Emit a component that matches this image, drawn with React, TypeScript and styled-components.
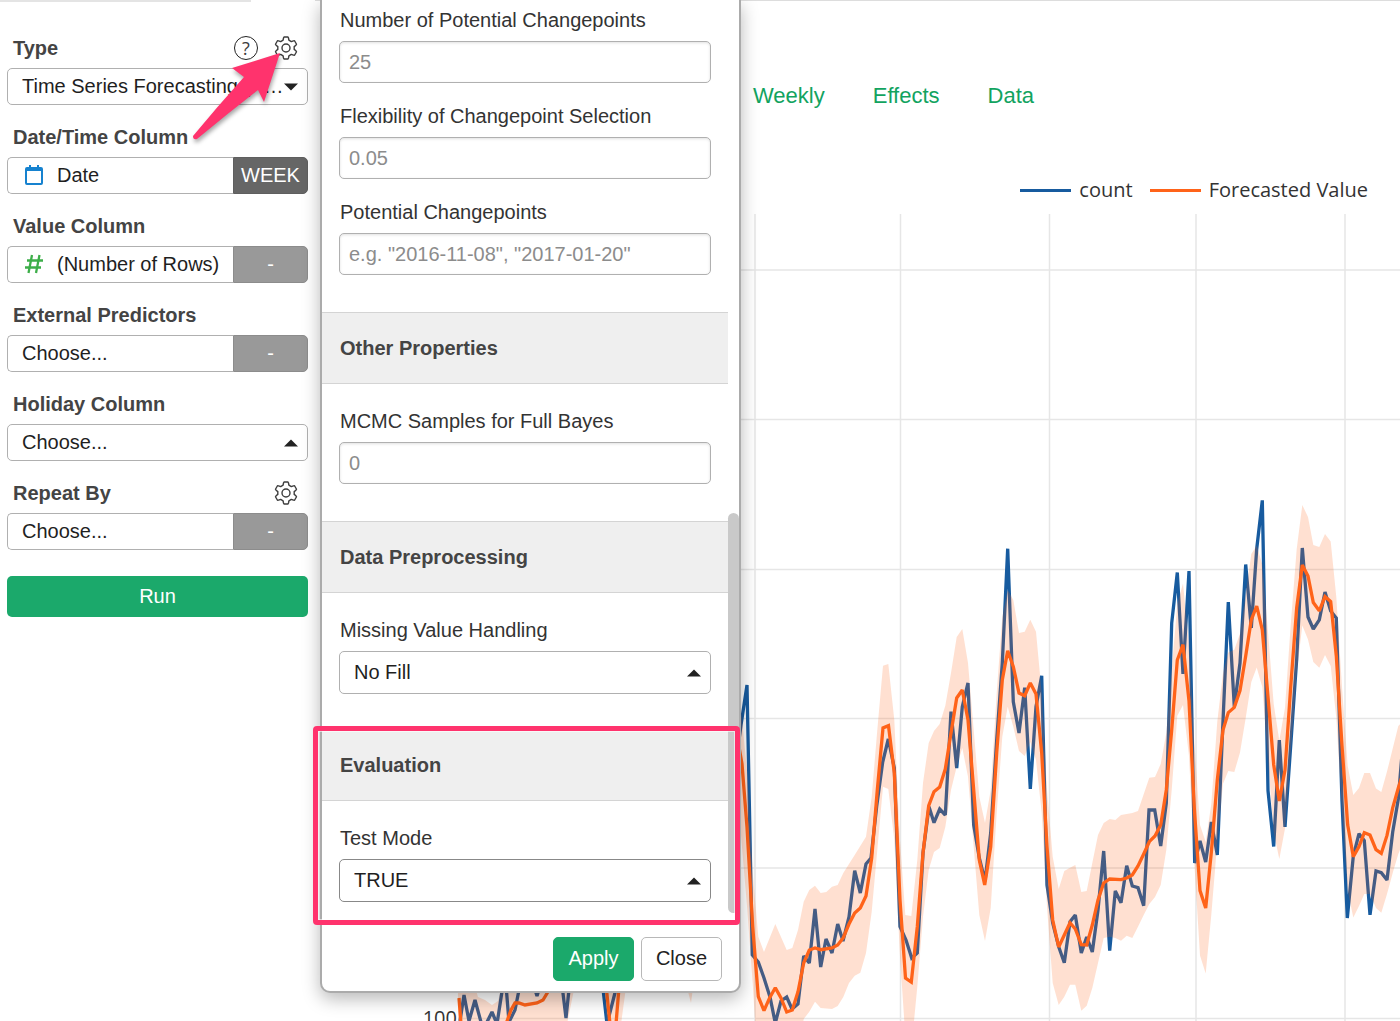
import React from "react";
import styled, { createGlobalStyle, css } from "styled-components";

const GlobalStyle = createGlobalStyle`
  *, *::before, *::after { box-sizing: border-box; }
  body {
    margin: 0;
    background: #fff;
    color: #222;
    font-family: "Liberation Sans", Arial, sans-serif;
    font-size: 20px;
    line-height: 24px;
  }
  button, input, select { font: inherit; color: inherit; margin: 0; }
`;

const green = "#1ba96b";
const pink = "#ff336d";
const blue = "#175b9f";
const orange = "#ff6319";

/* ---------- page ---------- */

const Page = styled.div`
  position: relative;
  display: grid;
  grid-template-columns: 315px minmax(0, 1fr);
  min-height: 100vh;
  overflow: hidden;
`;

const Sidebar = styled.form`
  position: relative;
  display: flex;
  flex-direction: column;
  gap: 22px;
  padding: 0 7px;
`;

const TopRule = styled.div`
  width: 251px;
  height: 2px;
  margin: 0 0 14px -7px;
  background: #e4e4e4;
`;

const Field = styled.div`
  display: flex;
  flex-direction: column;
  gap: 10px;
`;

const FieldHeader = styled.div`
  display: flex;
  align-items: center;
  gap: 16px;
  height: 20px;
  padding: 0 10px 0 6px;
`;

const FieldLabel = styled.label`
  flex: 1;
  color: #444;
  font-weight: bold;
  white-space: nowrap;
`;

const IconButton = styled.button`
  display: flex;
  padding: 0;
  border: 0;
  background: none;
  color: #3c3c3c;
`;

const HelpButton = styled(IconButton)`
  align-items: center;
  justify-content: center;
  width: 24px;
  height: 24px;
  border: 1px solid #222;
  border-radius: 50%;
  font-family: "Open Sans", "Noto Sans", sans-serif;
  font-size: 18px;
  line-height: 22px;
`;

const Control = styled.div`
  display: flex;
  height: 37px;
`;

const SelectBox = styled.div`
  position: relative;
  display: flex;
  align-items: center;
  flex: 1;
  min-width: 0;
`;

const Select = styled.select<{ $joined?: boolean; $icon?: boolean; $dark?: boolean }>`
  appearance: none;
  width: 100%;
  height: 100%;
  padding: 0 22px 2px ${(p) => (p.$icon ? 49 : 14)}px;
  border: 1px solid ${(p) => (p.$dark ? "#888" : "#b0b0b0")};
  border-radius: 5px;
  background: #fff;
  color: #1f1f1f;
  text-overflow: ellipsis;
  ${(p) =>
    p.$joined &&
    css`
      padding-right: 0;
      border-right: 0;
      border-radius: 5px 0 0 5px;
    `}
`;

const Caret = styled.svg<{ $up?: boolean }>`
  position: absolute;
  right: 10px;
  width: 14px;
  height: 8px;
  fill: #222;
  pointer-events: none;
  transform: ${(p) => (p.$up ? "none" : "rotate(180deg)")};
`;

const TypeIcon = styled.svg`
  position: absolute;
  left: 18px;
  width: 18px;
  height: 22px;
  fill: none;
  pointer-events: none;
`;

const Addon = styled.button<{ $active?: boolean }>`
  width: 75px;
  padding: 0 0 2px;
  border: 1px solid ${(p) => (p.$active ? "#5f5f5f" : "#8c8c8c")};
  border-radius: 0 5px 5px 0;
  background: ${(p) => (p.$active ? "#666" : "#999")};
  color: #fff;
`;

const RunButton = styled.button`
  height: 41px;
  margin-top: 4px;
  padding-bottom: 3px;
  border: 0;
  border-radius: 5px;
  background: ${green};
  color: #fff;
`;

/* ---------- result area ---------- */

const Main = styled.main`
  display: flex;
  flex-direction: column;
  border-top: 1px solid #ddd;
`;

const Tabs = styled.nav`
  display: flex;
  gap: 48px;
  padding: 81px 0 0 438px;
  font-size: 22px;
  line-height: 28px;
`;

const Tab = styled.a`
  color: #12a35f;
  text-decoration: none;
`;

const Legend = styled.div`
  display: flex;
  justify-content: flex-end;
  gap: 17px;
  padding: 66px 32px 9px 0;
  color: #333;
  font-family: "Open Sans", "Noto Sans", sans-serif;
  line-height: 28px;
`;

const LegendItem = styled.div<{ $color: string }>`
  display: flex;
  align-items: center;
  gap: 8px;
  &::before {
    content: "";
    width: 51px;
    height: 3px;
    background: ${(p) => p.$color};
  }
`;

const Plot = styled.svg`
  display: block;
  width: 100%;
  height: 808px;
`;

/* ---------- properties dialog ---------- */

const Dialog = styled.section`
  position: absolute;
  top: 0;
  left: 320px;
  width: 421px;
  border: 2px solid #ababab;
  border-top: 0;
  border-radius: 0 0 10px 10px;
  background: #fff;
  box-shadow: 0 6px 18px rgba(0, 0, 0, 0.28);
`;

const DialogBody = styled.div`
  display: flex;
`;

const DialogContent = styled.div`
  flex: 1;
  min-width: 0;
`;

const ScrollTrack = styled.div`
  display: flex;
  flex-direction: column;
  justify-content: flex-end;
  width: 11px;
  padding-bottom: 24px;
`;

const ScrollThumb = styled.div`
  height: 400px;
  border-radius: 6px;
  background: #c9c9c9;
`;

const Group = styled.section<{ $marked?: boolean }>`
  position: relative;
  ${(p) =>
    p.$marked &&
    css`
      &::after {
        content: "";
        position: absolute;
        z-index: 1;
        inset: -3px -12px 12px -9px;
        border: 5px solid ${pink};
        border-radius: 4px;
        box-shadow: inset 0 0 0 1px rgba(255, 255, 255, 0.6);
        pointer-events: none;
      }
    `}
`;

const GroupTitle = styled.h2`
  margin: 0;
  padding: 23px 18px;
  border: solid #d4d4d4;
  border-width: 1px 0;
  background: #efefef;
  color: #444;
  font-size: 20px;
  line-height: 24px;
`;

const Params = styled.div<{ $first?: boolean; $tight?: boolean }>`
  display: flex;
  flex-direction: column;
  gap: 21px;
  padding: ${(p) => (p.$first ? 8 : 25)}px 17px ${(p) => (p.$tight ? 35 : 37)}px;
`;

const Param = styled.div`
  display: flex;
  flex-direction: column;
  gap: 9px;
`;

const ParamLabel = styled.label`
  padding-left: 1px;
  color: #333;
`;

const ParamInput = styled.input`
  height: 42px;
  padding: 0 9px;
  border: 1px solid #b0b0b0;
  border-radius: 5px;
  background: #fff;
  box-shadow: inset 0 1px 3px rgba(0, 0, 0, 0.12);
  &::placeholder { color: #8c8c8c; opacity: 1; }
`;

const ParamControl = styled(Control)`
  height: 43px;
`;

const Footer = styled.footer`
  display: flex;
  justify-content: flex-end;
  gap: 7px;
  padding: 0 17px 10px;
`;

const DialogButton = styled.button<{ $primary?: boolean }>`
  height: 44px;
  min-width: 81px;
  padding: 0 13px 2px;
  border: 1px solid ${(p) => (p.$primary ? green : "#b8b8b8")};
  border-radius: 5px;
  background: ${(p) => (p.$primary ? green : "#fff")};
  color: ${(p) => (p.$primary ? "#fff" : "#222")};
`;

const Pointer = styled.svg`
  position: absolute;
  left: 184px;
  top: 44px;
  width: 106px;
  height: 106px;
  overflow: visible;
  pointer-events: none;
  filter: drop-shadow(1px 3px 2px rgba(0, 0, 0, 0.35));
`;

/* ---------- icons ---------- */

const gearPath = (() => {
  const tooth = [[-2.9, -7.8], [-2.5, -10], [-2, -11], [2, -11], [2.5, -10], [2.9, -7.8]];
  const pts: string[] = [];
  for (let i = 0; i < 6; i++) {
    const a = (i * Math.PI) / 3;
    tooth.forEach(([x, y]) => {
      pts.push(
        `${(x * Math.cos(a) - y * Math.sin(a)).toFixed(2)} ${(x * Math.sin(a) + y * Math.cos(a)).toFixed(2)}`
      );
    });
  }
  return `M${pts.join("L")}Z`;
})();

const Gear = () => (
  <svg width="24" height="24" viewBox="-12 -12 24 24" fill="none" stroke="currentColor" strokeWidth="1.4" strokeLinejoin="round" aria-hidden="true">
    <path d={gearPath} />
    <circle r="4" />
  </svg>
);

const CalendarIcon = () => (
  <TypeIcon viewBox="0 0 18 22" stroke="#1682cf" strokeWidth="2" aria-hidden="true">
    <rect x="1" y="3" width="16" height="16" rx="1" />
    <path d="M1 5H17M5 0V4M13 0V4" />
  </TypeIcon>
);

const HashIcon = () => (
  <TypeIcon viewBox="0 0 18 22" stroke="#3dae49" strokeWidth="2.3" aria-hidden="true">
    <path d="M7 1L3.500 19M14.500 1L11 19M2 6.500H18M0 13.500H16" />
  </TypeIcon>
);

const CaretIcon = ({ up }: { up?: boolean }) => (
  <Caret viewBox="0 0 14 8" $up={up} aria-hidden="true">
    <path d="M0 7.500L7 0.500L14 7.500Z" />
  </Caret>
);

/* ---------- chart series, plot coordinates ---------- */

const grid = { x: [755, 900.5, 1049.5, 1196, 1345], y: [270, 419.5, 569.5, 718.5, 868, 1018.5] };

const countEarly =
  "460,1021 464,995 469,1021 475,1000 481,1022 486,1024 492,1012 497,1024 503,985 506,985 509,1022 515,1010 520,985 532,980 537,996 542,980 562,985 566,1018 570,980 602,980 607,1024 617,985";
const forecastEarly =
  "459,998 461,1024 506,1024 511,1010 515,1003 519,1003 525,1005 537,1003 543,1000 549,990 555,975 605,975 610,1024 616,1024 620,975";

const count =
  "735,770 741,725 747,685 752.3,955 758.3,962 764,978 770,997 775.3,1023 781,1001 786.7,997 792,1009 798,1004 803.7,956 809.3,963 815,909 820.7,967 826,939 832,953 837.7,924 843,941 849,917 854.7,870.7 860.3,893 866,864 871,858 876.7,806 882.7,762 888.3,739 894.3,768 900,926.7 906,940 911.7,958 917.3,953 923,853 929,806.700 934,822.7 939.7,809 945.3,815 951,711.7 956.7,768 962.3,706.7 968,683 973.7,825 979.3,858 985,881 990.7,833 996.7,740 1002.3,663 1007.7,548.7 1013.3,701.7 1019,733 1024.7,687.7 1030.3,789 1036,706.7 1041.7,675.7 1047,885 1052.7,923 1058.7,946.7 1064.3,962.7 1070,921.7 1075.3,915 1081.3,953 1086.7,937 1092.3,952 1098,910 1103.7,851 1109.7,950.7 1115.3,891 1121,902.7 1126.7,865.7 1132.3,886 1138,887.7 1143.7,905.7 1149,810 1154.7,810 1160.7,846 1166.3,803 1171.7,623 1177.3,572.5 1183,674 1189,571 1194.7,863 1200,841 1205.7,862 1211.3,822 1217.3,855 1222.7,728 1228.3,602 1234.3,706.7 1240,663 1245.7,564.5 1251.3,628 1256.7,549 1262.3,500.4 1268,790.6 1273.7,846.5 1279.3,740 1285,826.8 1290.7,745.7 1296.7,659 1302.3,548 1308,617 1313.3,629 1319.3,619.8 1325,592 1330.7,611 1336.3,618 1342,801 1347.3,918 1353.3,856 1359,833.7 1364.3,840.6 1370,914.8 1376,871 1381.3,872.7 1387,880 1392.7,832 1398.3,799 1404,730";

const forecast =
  "736,730 742,764 747,827 752.7,926.7 758.3,996.7 764,1010.7 769.7,997.7 775.3,987.7 781,998 786.7,1012 792.3,1010 798,991.7 803.7,963 809.3,950 815,948 820.7,949.7 832,948 837.7,945 843.3,937.7 849,924 854.7,913 860.3,908 866,896 871.7,858 877.3,790 883,728 888.5,725.7 894.3,773 900,900 905.5,978 911.3,982 917.3,926.7 923,853 928.7,805.7 934,791.7 939.7,787 945.3,769 951,733 956.7,698 962.3,690 968,720 973.7,790 979.3,860 984.7,885 990.7,846.7 996.7,753 1002.3,680 1007.7,650.7 1013.3,666.7 1019,693 1024.7,695.7 1030.3,683 1036,694 1041.7,753 1047,846.7 1052.7,920 1058.7,947 1064.3,935 1070,922.7 1075.3,929 1081.3,944.7 1086.7,945 1092.3,925 1098,900 1103.7,883 1109.7,879 1121,879.7 1126.7,878 1132.3,875 1138,866 1143.7,854 1149.3,841.7 1155,836 1160.7,825 1166.3,790 1171.7,730 1177.3,660 1183,644.6 1189,701 1194.3,808 1200,890.6 1205.7,908 1211.3,852.7 1217.3,780 1223,730 1228.3,712.6 1234.3,707.4 1240,690.5 1245.7,656 1251.3,619.8 1256.7,606 1262.3,630 1268,697 1273.7,764.7 1279.3,801 1285,770 1290.7,687 1296.7,607.7 1302.3,565 1308,576 1313.3,602.5 1319.3,610.8 1325,596.6 1330.7,601.5 1336.3,656 1342,745.7 1347.7,825 1353.3,856.8 1359,846.5 1364.3,832.7 1370,835 1376,849.6 1381.3,853.4 1387,835.4 1392.7,807.8 1398.3,788 1404,770";

const upper =
  "738,680 747,770 752.7,873 758.3,936.7 764,952 775.3,924 786.7,950 792.3,948 798,930 803.7,901.7 809.3,890 815,885.7 820.7,893 826.3,892 832,886.7 837.7,885 843.3,873 854.7,855 866,836.7 871.7,796.7 877.3,730 883,665.7 888.3,664 894.3,720 900,840 905.3,915 911.3,916 917.3,860 923,783 928.7,743 934,731 939.7,724 945.3,705.7 951,673 956.7,637 962.3,629 968,663 973.7,730 979.3,796.7 985,823 990.7,790 996.7,693 1002.3,617 1007.7,590 1013.3,600 1019,633 1024.7,631.7 1030.3,619.7 1036,631.7 1041.7,693 1047,790 1052.7,856.7 1058.7,889 1064.3,871 1070,867.7 1075.3,865 1081.3,892 1086.7,891 1092.3,863 1098,835 1103.7,823 1109.7,819 1115.3,820 1121,815 1132.3,813 1138,811 1149.3,777.7 1155,777 1160.7,764 1166.3,733 1171.7,670 1177.3,604 1183,583.5 1189,645.6 1194.3,742 1200,825 1205.7,842 1211.3,804 1217.3,721.5 1223,673 1228.3,652.5 1234.3,649.8 1240,633.6 1245.7,594 1251.3,554 1256.7,545.6 1262.3,564.5 1268,632 1273.7,704 1279.3,740.5 1285,707.7 1290.7,625 1296.7,549 1302.3,505 1308,517 1313.3,545 1319.3,547 1325,534 1330.7,541.4 1336.3,597 1342,687 1347.7,766 1353.3,795 1359,788 1364.3,773 1370,773 1376,788.5 1381.3,792 1387,771.6 1398.3,726 1404,720";

const lower =
  "738,800 747,906 752.7,983 755,1021 757,1060 797,1060 803.7,1019 809.3,1011.7 815,1001.7 820.7,1008 832,1009 837.7,1006 843.3,997 849,983 854.7,975.7 860.3,972.7 866,953 871.7,911.7 877.3,850 883,786.7 888.3,789 894.3,840 900,956.7 904.3,1021 908,1060 911,1060 914,1021 917.3,986.7 923,916.7 928.7,870 934,852 939.7,848 945.3,827 951,790 956.7,766.7 962.3,748 968,776.7 973.7,846.7 979.3,915 985,941 990.7,908 996.7,813 1002.3,736.7 1007.7,706.7 1013.3,726.7 1019,751 1024.7,756 1030.3,742 1036,760 1041.7,813 1047,906.7 1052.7,983 1058.7,1005 1064.3,996.7 1070,984.7 1075.3,984.7 1081.3,1010.7 1086.7,1005.7 1092.3,988 1098,963 1103.7,938 1109.7,936.7 1115.3,938 1121,940.7 1126.7,935.7 1132.3,938 1138,926.7 1143.7,915 1149.3,904 1155,897 1160.7,885 1166.3,850 1171.7,790 1177.3,715.7 1183,705 1189,756 1194.3,863 1200,955.5 1205.7,973.4 1211.3,914.8 1217.3,842 1223,783.7 1228.3,771 1234.3,772 1240,752.6 1245.7,718 1251.3,682 1256.7,667.4 1262.3,687 1268,759.5 1273.7,832 1279.3,859 1285,828.5 1290.7,752.6 1296.7,673 1302.3,625.6 1308,639.4 1313.3,662 1319.3,667.7 1325,655 1330.7,666 1336.3,718 1342,811 1347.7,890.6 1353.3,917.6 1359,906 1364.3,894 1370,894 1376,908 1381.3,912.7 1387,894 1392.7,873 1398.3,854 1404,840";

const band = `${upper} ${lower.split(" ").reverse().join(" ")}`;

const bandsEarly = [
  "458,1024 458,980 473,980 478,997 485,1000 492,1005 498,1001 503,980 576,980 567,1024",
  "604,980 627,980 621,1024 607,1024",
  "685,980 694,980 691,1003",
];

const Chart = () => (
  <Plot viewBox="315 213 1085 808" preserveAspectRatio="xMinYMin slice" role="img" aria-label="Forecast of weekly count">
    <g stroke="#e6e6e6">
      {grid.y.map((y) => (
        <line key={y} x1="460" x2="1400" y1={y} y2={y} strokeWidth="1.3" />
      ))}
      {grid.x.map((x) => (
        <line key={x} x1={x} x2={x} y1="214" y2="1021" strokeWidth="1.5" />
      ))}
    </g>
    <g fill="none" stroke={blue} strokeWidth="3.3" strokeMiterlimit="2">
      <polyline points={countEarly} />
      <polyline points={count} />
    </g>
    <g fill={orange} fillOpacity="0.2">
      {bandsEarly.map((points) => (
        <polygon key={points} points={points} />
      ))}
      <polygon points={band} />
    </g>
    <g fill="none" stroke={orange} strokeWidth="3.3" strokeMiterlimit="2">
      <polyline points={forecastEarly} />
      <polyline points={forecast} />
    </g>
    <text x="457" y="1025" textAnchor="end" fontFamily="Open Sans, Noto Sans, sans-serif" fontSize="20" fill="#333">
      100
    </text>
  </Plot>
);

/* ---------- form parts ---------- */

type SideFieldProps = {
  id: string;
  label: string;
  value: string;
  icon?: React.ReactNode;
  addon?: string;
  caret?: "up" | "down";
  actions?: React.ReactNode;
};

const SideField = ({ id, label, value, icon, addon, caret, actions }: SideFieldProps) => (
  <Field>
    <FieldHeader>
      <FieldLabel htmlFor={id}>{label}</FieldLabel>
      {actions}
    </FieldHeader>
    <Control>
      <SelectBox>
        <Select id={id} $joined={!!addon} $icon={!!icon}>
          <option>{value}</option>
        </Select>
        {icon}
        {caret && <CaretIcon up={caret === "up"} />}
      </SelectBox>
      {addon && (
        <Addon type="button" $active={addon !== "-"}>
          {addon}
        </Addon>
      )}
    </Control>
  </Field>
);

const TextParam = ({ id, label, placeholder }: { id: string; label: string; placeholder: string }) => (
  <Param>
    <ParamLabel htmlFor={id}>{label}</ParamLabel>
    <ParamInput id={id} type="text" placeholder={placeholder} />
  </Param>
);

const SelectParam = ({ id, label, value, dark }: { id: string; label: string; value: string; dark?: boolean }) => (
  <Param>
    <ParamLabel htmlFor={id}>{label}</ParamLabel>
    <ParamControl>
      <SelectBox>
        <Select id={id} $dark={dark}>
          <option>{value}</option>
        </Select>
        <CaretIcon up />
      </SelectBox>
    </ParamControl>
  </Param>
);

const GearButton = ({ label }: { label: string }) => (
  <IconButton type="button" aria-label={label}>
    <Gear />
  </IconButton>
);

export default function App() {
  return (
    <>
      <GlobalStyle />
      <Page>
        <Sidebar>
          <TopRule />
          <SideField
            id="type"
            label="Type"
            value="Time Series Forecasting (Prophet)"
            caret="down"
            actions={
              <>
                <HelpButton type="button" aria-label="Help">?</HelpButton>
                <GearButton label="Type settings" />
              </>
            }
          />
          <SideField id="date" label="Date/Time Column" value="Date" icon={<CalendarIcon />} addon="WEEK" />
          <SideField id="value" label="Value Column" value="(Number of Rows)" icon={<HashIcon />} addon="-" />
          <SideField id="predictors" label="External Predictors" value="Choose..." addon="-" />
          <SideField id="holiday" label="Holiday Column" value="Choose..." caret="up" />
          <SideField
            id="repeat"
            label="Repeat By"
            value="Choose..."
            addon="-"
            actions={<GearButton label="Repeat settings" />}
          />
          <RunButton type="button">Run</RunButton>
        </Sidebar>

        <Main>
          <Tabs>
            <Tab href="#weekly">Weekly</Tab>
            <Tab href="#effects">Effects</Tab>
            <Tab href="#data">Data</Tab>
          </Tabs>
          <Legend>
            <LegendItem $color={blue}>count</LegendItem>
            <LegendItem $color={orange}>Forecasted Value</LegendItem>
          </Legend>
          <Chart />
        </Main>

        <Dialog role="dialog" aria-label="Properties">
          <DialogBody>
            <DialogContent>
              <Params $first>
                <TextParam id="changepoint-count" label="Number of Potential Changepoints" placeholder="25" />
                <TextParam id="flexibility" label="Flexibility of Changepoint Selection" placeholder="0.05" />
                <TextParam
                  id="changepoints"
                  label="Potential Changepoints"
                  placeholder={'e.g. "2016-11-08", "2017-01-20"'}
                />
              </Params>
              <Group>
                <GroupTitle>Other Properties</GroupTitle>
                <Params>
                  <TextParam id="mcmc" label="MCMC Samples for Full Bayes" placeholder="0" />
                </Params>
              </Group>
              <Group>
                <GroupTitle>Data Preprocessing</GroupTitle>
                <Params $tight>
                  <SelectParam id="missing" label="Missing Value Handling" value="No Fill" />
                </Params>
              </Group>
              <Group $marked>
                <GroupTitle>Evaluation</GroupTitle>
                <Params $tight>
                  <SelectParam id="test-mode" label="Test Mode" value="TRUE" dark />
                </Params>
              </Group>
            </DialogContent>
            <ScrollTrack>
              <ScrollThumb />
            </ScrollTrack>
          </DialogBody>
          <Footer>
            <DialogButton type="button" $primary>Apply</DialogButton>
            <DialogButton type="button">Close</DialogButton>
          </Footer>
        </Dialog>

        <Pointer viewBox="184 44 106 106" aria-hidden="true">
          <path d="M280 53L232 68L244 77Q217 107 193 136Q193 140 197 139Q227 114 258 90L264 102Z" fill={pink} />
        </Pointer>
      </Page>
    </>
  );
}
